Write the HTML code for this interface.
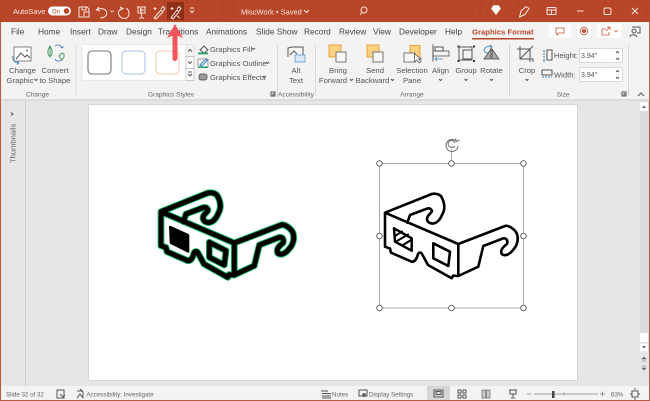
<!DOCTYPE html>
<html><head><meta charset="utf-8"><style>
html,body{margin:0;padding:0;background:#fff;overflow:hidden}
svg{display:block;filter:blur(.3px)}
text{font-family:"Liberation Sans",sans-serif;font-size:7.7px;fill:#555}
.t{font-size:8.3px;fill:#444}
.c{text-anchor:middle}
.w{fill:#f7e6df;font-size:7.5px}
.g{font-size:6.6px;fill:#666}
.b{font-size:7.6px}
.s{font-size:6.2px;fill:#666}
.i{fill:none;stroke:#555;stroke-width:1}
.wi{fill:none;stroke:#f7e6df;stroke-width:1}
</style></head><body>
<svg width="650" height="401" viewBox="0 0 650 401" xmlns="http://www.w3.org/2000/svg">
<defs>
<path id="gl" d="M385 212.7L458.3 244V276M385 212.7V246.7L390 248.5L391 252.7L411.7 261.7C415 262 417 258 418 254C419 252 421 252 422 254L428 265L451.7 278.3L453 275.7L458.3 276L478.3 266.7L483.3 246L503.3 238.3C507 238 508 241 507 244C503 247 500 250 501.7 254C505 257 510 254 513 250C518 245 519 237 516 232C513 228 508 225 505 226L458.3 244M385 212.7L431.7 194C437 193 441 195 442 198C445 204 445 210 442 215C440 220 436 224 432 223.5C427 223 426 219 428 216C430 213 433 212 431.5 210C430 208 428 208 426 209L410 215L407.3 222.7M433.3 243.3L450 251.7L448.3 266L433.3 258.3Z"/>
</defs>
<rect width="650" height="401" fill="#bc5a40"/>
<!-- title bar -->
<rect x="0" y="0" width="650" height="22" fill="#b8472a"/>
<g fill="none" stroke="#ad4025" stroke-width="1" opacity=".7">
<circle cx="500" cy="10" r="12"/><circle cx="500" cy="10" r="20"/><circle cx="500" cy="10" r="28"/>
<circle cx="625" cy="10" r="14"/><circle cx="625" cy="10" r="22"/><circle cx="210" cy="8" r="14"/><circle cx="210" cy="8" r="24"/>
</g>
<text x="13" y="14" class="w">AutoSave</text>
<rect x="48" y="6.500" width="23" height="9" rx="4.500" fill="#fff"/>
<circle cx="66.500" cy="11" r="2.800" fill="#b8472a"/>
<text x="52" y="13.500" style="font-size:6px;fill:#b8472a">On</text>
<!-- qat icons -->
<g class="wi">
<path d="M79 7h8l2 2v4M79 7v10h4M82 7v3h4V7M84 12h5v5h-5z"/>
<path d="M99 7l-2.500 3 3.500 1M96.500 10c3-2 9-2 10 2s-3 6-6 6"/>
<path d="M110.500 10.500l1.500 1.500 1.500-1.500" stroke-width=".8"/>
<path d="M120 7l3 1.500-3 1.500M123 8.500c-3 0-5 3-4.500 5.500s3 4.500 6 4.500 5-3 4.500-6-2-4-2.500-4.500"/>
<path d="M137 7h9M138 7v6h7V7M141.500 13v4M139 18h5M140.500 8.500l2.500 1.500-2.500 1.500z"/>
<path d="M154 18l7-8 2 2-7 7zM161 9l2-2.500 2 2-2 2.500M155 7v3M153.500 8.500h3"/>
</g>
<rect x="167" y="2" width="17" height="18" fill="#8f3019"/>
<path d="M171 18l6-8 2 2-6 7zM177 9l2-2.500 2 2-2 2.500M172 7v3M170.500 8.500h3M177 16l3 2" class="wi"/>
<path d="M190 8h4M190 10.500l2 2 2-2" class="wi" stroke-width=".8"/>
<text x="241" y="14.300" class="w">MiscWork • Saved</text>
<path d="M304 10l2.500 2.500 2.500-2.500" class="wi"/>
<circle cx="364" cy="10" r="3" class="wi"/><path d="M362 12.500l-2 2.500" class="wi"/>
<path d="M491.500 8.500l2-3h5l2 3-4.500 6zM492 8.500h8" stroke="#fff" fill="#fff" stroke-width=".6"/>
<path d="M519.500 17l1.500-6 5-4.500 3 2-4 6zM520 17l3-2" class="wi"/>
<rect x="547" y="7.500" width="9" height="7" rx="1" class="wi"/><path d="M551.500 9.500v5M547 10h9" class="wi"/>
<path d="M577 11h6.500" class="wi"/>
<rect x="604" y="8" width="7" height="6.500" rx="1.500" class="wi"/>
<path d="M632 8l6 6M638 8l-6 6" class="wi"/>

<!-- ribbon -->
<rect x="1" y="22" width="648" height="78" fill="#f4f3f2"/>
<rect x="1" y="99" width="648" height="2" fill="#dcdcdc"/>
<text x="11" y="34.500" class="t">File</text>
<text x="38" y="34.500" class="t">Home</text>
<text x="70" y="34.500" class="t">Insert</text>
<text x="98" y="34.500" class="t">Draw</text>
<text x="126" y="34.500" class="t">Design</text>
<text x="158" y="34.500" class="t">Transitions</text>
<text x="206" y="34.500" class="t">Animations</text>
<text x="256" y="34.500" class="t">Slide Show</text>
<text x="304" y="34.500" class="t">Record</text>
<text x="339" y="34.500" class="t">Review</text>
<text x="373" y="34.500" class="t">View</text>
<text x="399" y="34.500" class="t">Developer</text>
<text x="445" y="34.500" class="t">Help</text>
<text x="472" y="34.500" style="fill:#b8472a;font-weight:bold;font-size:7.700px">Graphics Format</text>
<rect x="472" y="38" width="62" height="1.500" fill="#b8472a"/>
<!-- top right buttons -->
<rect x="549" y="24" width="22" height="14" rx="2" fill="#fff"/>
<path d="M556 28h8v5h-5l-2 2v-2h-1z" fill="none" stroke="#c9573a" stroke-width=".8"/>
<rect x="577" y="24" width="14" height="14" rx="2" fill="#fff"/>
<circle cx="584" cy="31" r="3.800" fill="none" stroke="#c9573a" stroke-width=".8"/><circle cx="584" cy="31" r="2.200" fill="#c9573a"/>
<rect x="597" y="24" width="24" height="14" rx="2" fill="#fff"/>
<path d="M602 29h4M602 29v6h7v-3M606 31l4-4M607 27h3v3" fill="none" stroke="#c9573a" stroke-width=".8"/>
<path d="M614 30l2 2 2-2" fill="none" stroke="#c9573a" stroke-width=".7"/>
<path d="M632 27h8v6h-3M634 29a2 2 0 1 0 .1 0M630 37c0-3 6-3 7 0" class="i" stroke-width=".9"/>

<!-- Change group -->
<rect x="14" y="47" width="17" height="14" fill="#fff" stroke="#666" stroke-width=".8"/>
<path d="M16 59l5-6 4 4 2-2 3 3" class="i" stroke-width=".7"/>
<circle cx="27" cy="50.500" r="1" fill="#666"/>
<path d="M13 56c-1 4 2 7 6 7M17 61.500l2 1.500-2 1.500" fill="none" stroke="#3f86c6" stroke-width=".9"/>
<path d="M50 46l-2 4 0 4 2 3 2-3 0-4zM50 46v11" fill="none" stroke="#4c9a66" stroke-width="1"/>
<path d="M55 46c3-2 6-1 7 2M60.500 46.500l1.500 1.500 1.500-1.500M62 60c-3 2-6 1-7-1" fill="none" stroke="#3f86c6" stroke-width=".9"/>
<path d="M62 53l-3 3 3 4 2-3 0-3z" fill="none" stroke="#4c9a66" stroke-width="1"/>
<text x="22.500" y="73" class="c">Change</text>
<text x="20" y="83" class="c">Graphic</text>
<path d="M34.500 79l1.500 1.500 1.500-1.500" class="i" stroke-width=".6"/>
<text x="55" y="73" class="c">Convert</text>
<text x="55" y="83" class="c">to Shape</text>
<text x="37.500" y="96.500" class="c g">Change</text>
<rect x="75.500" y="44" width=".8" height="52" fill="#d4d4d4"/>
<!-- style gallery -->
<rect x="82" y="44.500" width="104" height="36" fill="#fff" stroke="#e2e2e2" stroke-width=".7"/>
<rect x="88" y="51" width="23" height="23" rx="4" fill="#fff" stroke="#777" stroke-width="1.100"/>
<rect x="122" y="51" width="23" height="23" rx="4" fill="#fff" stroke="#a8c2e8" stroke-width="1"/>
<rect x="156" y="51" width="23" height="23" rx="4" fill="#fff" stroke="#f4c4a8" stroke-width="1"/>
<rect x="186" y="44.500" width="8" height="12" fill="#f2f2f2" stroke="#ddd" stroke-width=".6"/>
<rect x="186" y="56.500" width="8" height="12" fill="#fff" stroke="#aaa" stroke-width=".6"/>
<rect x="186" y="68.500" width="8" height="12" fill="#fff" stroke="#aaa" stroke-width=".6"/>
<path d="M188 51.500l2-2 2 2" class="i" stroke="#bbb" stroke-width=".7"/>
<path d="M188 61.500l2 2 2-2" class="i" stroke-width=".8"/>
<path d="M188 72h4M188 74l2 2 2-2" class="i" stroke-width=".7"/>
<!-- graphics fill etc -->
<path d="M200 50l4-4 4 4-4 3z" class="i" stroke-width=".8"/><rect x="198" y="52.500" width="10" height="1.800" fill="#21a366"/>
<text x="210" y="52" class="b">Graphics Fill</text><path d="M252 48l1.500 1.500 1.500-1.500" class="i" stroke-width=".6"/>
<path d="M200 65l6-6 1.500 1.500-6 5.500z" fill="none" stroke="#3f86c6"/><rect x="198" y="59" width="10" height="8" fill="none" stroke="#555" stroke-width=".5"/><rect x="198" y="66.500" width="10" height="1.500" fill="#21a366"/>
<text x="210" y="66" class="b">Graphics Outline</text><path d="M266 62l1.500 1.500 1.500-1.500" class="i" stroke-width=".6"/>
<rect x="199" y="74" width="8" height="6" rx="2" fill="#999" stroke="#444" stroke-width=".7"/>
<text x="210" y="80" class="b">Graphics Effects</text><path d="M263 76l1.500 1.500 1.500-1.500" class="i" stroke-width=".6"/>
<text x="171" y="96.500" class="c g">Graphics Styles</text>
<path d="M271 92h4v4h-4zM273 94h2v2h-2z" class="i" stroke-width=".6"/>
<rect x="277" y="44" width=".8" height="52" fill="#d4d4d4"/>
<!-- alt text -->
<path d="M288 57v-9l4-1h11v11h-5" class="i" stroke-width=".9"/><path d="M290 55l4-4 3 3" class="i" stroke-width=".7"/>
<rect x="295" y="55" width="10" height="7" fill="#dce9f7" stroke="#5a9bd5" stroke-width=".8"/>
<text x="296" y="73" class="c">Alt</text><text x="296" y="83" class="c">Text</text>
<text x="296" y="96.500" class="c g">Accessibility</text>
<rect x="315" y="44" width=".8" height="52" fill="#d4d4d4"/>
<!-- arrange -->
<rect x="329" y="45" width="12" height="12" fill="#fbd27f" stroke="#e8a33d"/><rect x="336" y="52" width="10" height="10" fill="#f7f7f7" stroke="#777"/>
<text x="338" y="73" class="c">Bring</text><text x="333" y="83" class="c">Forward</text><path d="M350 79l1.500 1.500 1.500-1.500" class="i" stroke-width=".6"/>
<rect x="367" y="45" width="12" height="12" fill="#fbd27f" stroke="#e8a33d"/><rect x="373" y="52" width="10" height="10" fill="#f7f7f7" stroke="#777"/>
<text x="375" y="73" class="c">Send</text><text x="372.500" y="83" class="c">Backward</text><path d="M391 79l1.500 1.500 1.500-1.500" class="i" stroke-width=".6"/>
<rect x="410" y="45.500" width="10" height="12" fill="#fbd27f" stroke="#e8a33d"/><rect x="404" y="53" width="11" height="9" fill="#f7f7f7" stroke="#777"/>
<path d="M414.500 54l0 8 2-2 3 3 1.500-1.500-2.500-2.500h3z" fill="#fff" stroke="#444" stroke-width=".7"/>
<text x="412" y="73" class="c">Selection</text><text x="412" y="83" class="c">Pane</text>
<path d="M433 44.500v17" class="i"/><rect x="435" y="47" width="8" height="4" class="i" stroke-width=".8"/><rect x="433" y="51" width="16" height="5" fill="none" stroke="#555" stroke-width=".8"/>
<path d="M443 59h-8M437 57l-2 2 2 2" fill="none" stroke="#3f86c6" stroke-width=".8"/>
<text x="440.500" y="73" class="c">Align</text><path d="M439 79l1.500 1.500 1.500-1.500" class="i" stroke-width=".6"/>
<rect x="459" y="47" width="13" height="13" class="i" stroke-width=".8"/><rect x="463" y="50" width="9" height="9" class="i" stroke-width=".8"/>
<g fill="#333"><rect x="457.500" y="45.500" width="2" height="2"/><rect x="473" y="45.500" width="2" height="2"/><rect x="457.500" y="60" width="2" height="2"/><rect x="473" y="60" width="2" height="2"/></g>
<text x="466" y="73" class="c">Group</text><path d="M464.500 79l1.500 1.500 1.500-1.500" class="i" stroke-width=".6"/>
<path d="M484 59l7-10 0 10zM492 49l7 10h-7z" fill="#aaa" stroke="#444" stroke-width=".7"/>
<path d="M484 51c0-4 5-6 8-4M490 45l2 2-2 2M484 50c0 2 2 3 4 3" fill="none" stroke="#3f86c6" stroke-width=".9"/>
<text x="491.500" y="73" class="c">Rotate</text><path d="M490 79l1.500 1.500 1.500-1.500" class="i" stroke-width=".6"/>
<text x="412" y="96.500" class="c g">Arrange</text>
<rect x="509" y="44" width=".8" height="52" fill="#cfcfcf"/>
<!-- crop + size -->
<path d="M520 46v13h13v3M517 49h13v13M520 59l13-13" class="i" stroke-width=".8"/>
<text x="527" y="73" class="c">Crop</text><path d="M525.500 79l1.500 1.500 1.500-1.500" class="i" stroke-width=".6"/>
<path d="M545 51h-1v10h1M543 51h3M543 61h3" fill="none" stroke="#3f86c6" stroke-width="1" stroke-dasharray="2 1"/><rect x="547" y="50" width="5" height="10" class="i" stroke-width=".8"/>
<text x="554" y="58" class="b">Height:</text>
<rect x="542" y="70" width="10" height="5" class="i" stroke-width=".8"/><path d="M542 77h10" fill="none" stroke="#3f86c6" stroke-width="1" stroke-dasharray="2 1"/>
<text x="554" y="77.500" class="b">Width:</text>
<rect x="579.500" y="48.500" width="43" height="14" fill="#fff" stroke="#ccc" stroke-width=".7"/>
<rect x="579.500" y="67.500" width="43" height="14" fill="#fff" stroke="#ccc" stroke-width=".7"/>
<text x="581" y="58" style="font-size:7px">3.94"</text><text x="581" y="77" style="font-size:7px">3.94"</text>
<path d="M616 53l1.500-1.500 1.500 1.500M616 58l1.500 1.500 1.500-1.500M616 72l1.500-1.500 1.500 1.500M616 77l1.500 1.500 1.500-1.500" class="i" stroke-width=".6"/>
<text x="563" y="96.500" class="c g">Size</text>
<path d="M622 92h4v4h-4zM624 94h2v2h-2z" class="i" stroke-width=".6"/>
<rect x="628" y="44" width=".8" height="52" fill="#d4d4d4"/>
<path d="M638 96l3-3 3 3" class="i" stroke-width=".8"/>

<!-- workspace -->
<rect x="1" y="101" width="648" height="285" fill="#e6e6e6"/>
<rect x="25" y="101" width="1" height="285" fill="#cfcfcf"/>
<path d="M11 112.500l2 1.500-2 1.500" fill="none" stroke="#555" stroke-width="1"/>
<text transform="translate(15.500 163) rotate(-90)" style="font-size:7.600px;fill:#666">Thumbnails</text>
<rect x="89" y="105" width="488" height="275" fill="#fff"/>
<rect x="88.500" y="104.500" width="489" height="276" fill="none" stroke="#cfcfcf" stroke-width=".7"/>
<!-- scrollbar -->
<rect x="640" y="101" width="9" height="285" fill="#dcdcdc"/>
<rect x="640" y="102" width="8" height="9" fill="#fff"/>
<path d="M642 108l2-2.500 2 2.500z" fill="#666"/>
<rect x="640" y="333" width="8" height="9" fill="#fff"/>
<rect x="640" y="343.500" width="8" height="8" fill="#fff"/>
<path d="M642 346l2 2.500 2-2.500z" fill="#666"/>
<rect x="640" y="352" width="9" height="34" fill="#e6e6e6"/>
<path d="M642 359l2-2 2 2zM642 361h4M642 366h4M642 368l2 2 2-2z" fill="#666" stroke="#666" stroke-width=".6"/>
<!-- glasses left -->
<g transform="translate(-224 -1)" fill="none" stroke-linejoin="round" stroke-linecap="round">
<use href="#gl" stroke="#17c26b" stroke-width="6.800"/>
<use href="#gl" stroke="#000" stroke-width="5"/>
<path d="M394 227.700L412.300 236V252.700L394.700 244Z" fill="#000" stroke="#000" stroke-width="2"/>
</g>
<!-- selection box -->
<rect x="379.500" y="163.500" width="144" height="144.500" fill="none" stroke="#aaa" stroke-width="1"/>
<path d="M451.500 149V163" stroke="#aaa" stroke-width="1"/>
<g fill="#fff" stroke="#555" stroke-width=".9">
<circle cx="379.500" cy="163.500" r="2.800"/><circle cx="451.500" cy="163.500" r="2.800"/><circle cx="523.500" cy="163.500" r="2.800"/>
<circle cx="379.500" cy="236" r="2.800"/><circle cx="523.500" cy="236" r="2.800"/>
<circle cx="379.500" cy="308" r="2.800"/><circle cx="451.500" cy="308" r="2.800"/><circle cx="523.500" cy="308" r="2.800"/>
</g>
<path d="M458 146a6 6 0 1 1-2-5M455.500 138.500l1 3 3-1.500M454.500 146a3.500 3.500 0 1 1 .5-3" fill="none" stroke="#777" stroke-width="1.100"/>
<!-- glasses right -->
<g fill="none" stroke="#000" stroke-width="2.600" stroke-linejoin="round" stroke-linecap="round">
<use href="#gl"/>
<path d="M394 228.300L411.700 238.300V250.700L395 241.700Z" stroke-width="2.500"/>
<path d="M395 236L402 231.500M397 241L408 234.500M403 245L411 240" stroke-width="2"/>
</g>

<!-- status bar -->
<rect x="1" y="386" width="648" height="14" fill="#f3f3f3"/>
<rect x="0" y="400" width="650" height="1" fill="#bc5a40"/>
<text x="6" y="396.300" class="s">Slide 32 of 32</text>
<rect x="57" y="390" width="7" height="8" class="i" stroke-width=".8"/><path d="M60 394l3 3 2-2" class="i" stroke-width=".8"/>
<path d="M77 391h6M80 389l3 3v6M77 398l3-4 3 4" class="i" stroke-width=".9"/>
<text x="86.500" y="396.300" class="s">Accessibility: Investigate</text>
<path d="M321 391h7M322 393.500h9M322 396h9M322 398h9" class="i" stroke-width=".7"/>
<text x="332" y="396.300" class="s">Notes</text>
<rect x="359" y="390" width="8" height="6" class="i" stroke-width=".8"/><circle cx="364" cy="395" r="2" fill="#666"/>
<text x="369" y="396.300" class="s">Display Settings</text>
<rect x="427" y="386" width="23" height="14" fill="#d6d6d6"/>
<rect x="434" y="390" width="9" height="7" class="i" stroke-width=".8"/><rect x="436" y="391.500" width="5" height="3" class="i" stroke-width=".6"/>
<path d="M458 390h3v3h-3zM463 390h3v3h-3zM458 395h3v3h-3zM463 395h3v3h-3z" class="i" stroke-width=".7"/>
<rect x="482" y="390" width="8" height="8" fill="#ccc" stroke="#666" stroke-width=".7"/><path d="M486 390v8" class="i" stroke-width=".6"/>
<path d="M509 390h8M510 390v4h6v-4M513 394v3M511 398h4" class="i" stroke-width=".8"/>
<path d="M527 394h4M534 394h64" stroke="#888" stroke-width=".8"/>
<rect x="552" y="391" width="2.500" height="7" fill="#444"/>
<path d="M564 392.500v3" stroke="#888" stroke-width=".7"/>
<path d="M600 394h5M602.500 391.500v5" stroke="#777" stroke-width=".7"/>
<text x="611" y="396.600" class="s">63%</text>
<rect x="632" y="391" width="6" height="6" class="i" stroke-width=".8"/>
<path d="M635 388v2M635 398v2M630 394h2M638 394h2" class="i" stroke-width=".9"/>
<!-- red arrow -->
<rect x="172.500" y="33" width="5" height="28" rx="2.500" fill="#f0555a"/>
<path d="M175 24L183 38L175 34.500L167 38Z" fill="#f0555a"/>
</svg>
</body></html>
